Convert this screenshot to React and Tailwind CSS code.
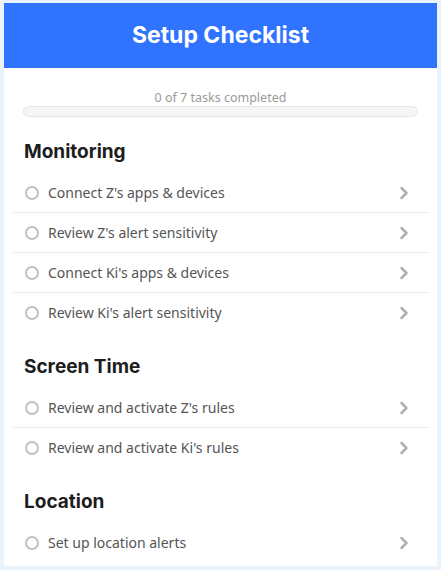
import { ChevronRight } from 'lucide-react'

const sections = [
  {
    title: 'Monitoring',
    tasks: [
      "Connect Z's apps & devices",
      "Review Z's alert sensitivity",
      "Connect Ki's apps & devices",
      "Review Ki's alert sensitivity"
    ]
  },
  {
    title: 'Screen Time',
    tasks: ["Review and activate Z's rules", "Review and activate Ki's rules"]
  },
  {
    title: 'Location',
    tasks: ['Set up location alerts']
  }
]

function TaskRow({ label, last }) {
  return (
    <div
      className={`flex h-10 items-center pl-[12px] pr-[14px] ${last ? '' : 'border-b border-[#e9e9e9]'}`}
    >
      <span className="h-[14px] w-[14px] rounded-full border-2 border-[#c2c2c2]" />
      <span className="ml-[9px] flex-1 text-[14px] leading-[20px] text-[#555555]">{label}</span>
      <ChevronRight className="text-[#b0b0b0]" size={20} strokeWidth={3} />
    </div>
  )
}

export default function App() {
  return (
    <div
      className="min-h-[570px] w-[441px] bg-[#eaf3fc] px-[4px] pt-[3px] pb-[4px]"
      style={{ fontFamily: '"Noto Sans", "Open Sans", sans-serif' }}
    >
      <div className="h-[563px] bg-white">
        <div className="flex h-[65px] items-center justify-center bg-[#2f73ff]">
          <h1
            className="text-[23px] font-bold text-white"
            style={{ fontFamily: 'Inter, sans-serif' }}
          >
            Setup Checklist
          </h1>
        </div>

        <div className="mb-[1px] px-[19px] pt-[22px]">
          <p className="text-center text-[12.5px] leading-[16px] text-[#9a9a9a]">
            0 of 7 tasks completed
          </p>
          <div className="h-[11px] rounded-full border border-[#e6e6e6] bg-[#f5f5f5]" />
        </div>

        {sections.map((section) => (
          <div key={section.title} className="px-[9px] pt-[22px]">
            <h2
              className="mb-[9px] pl-[11px] text-[19px] font-bold leading-[24px] text-[#1d1d1d]"
              style={{ fontFamily: 'Inter, sans-serif' }}
            >
              {section.title}
            </h2>
            {section.tasks.map((task, i) => (
              <TaskRow key={task} label={task} last={i === section.tasks.length - 1} />
            ))}
          </div>
        ))}
      </div>
    </div>
  )
}
